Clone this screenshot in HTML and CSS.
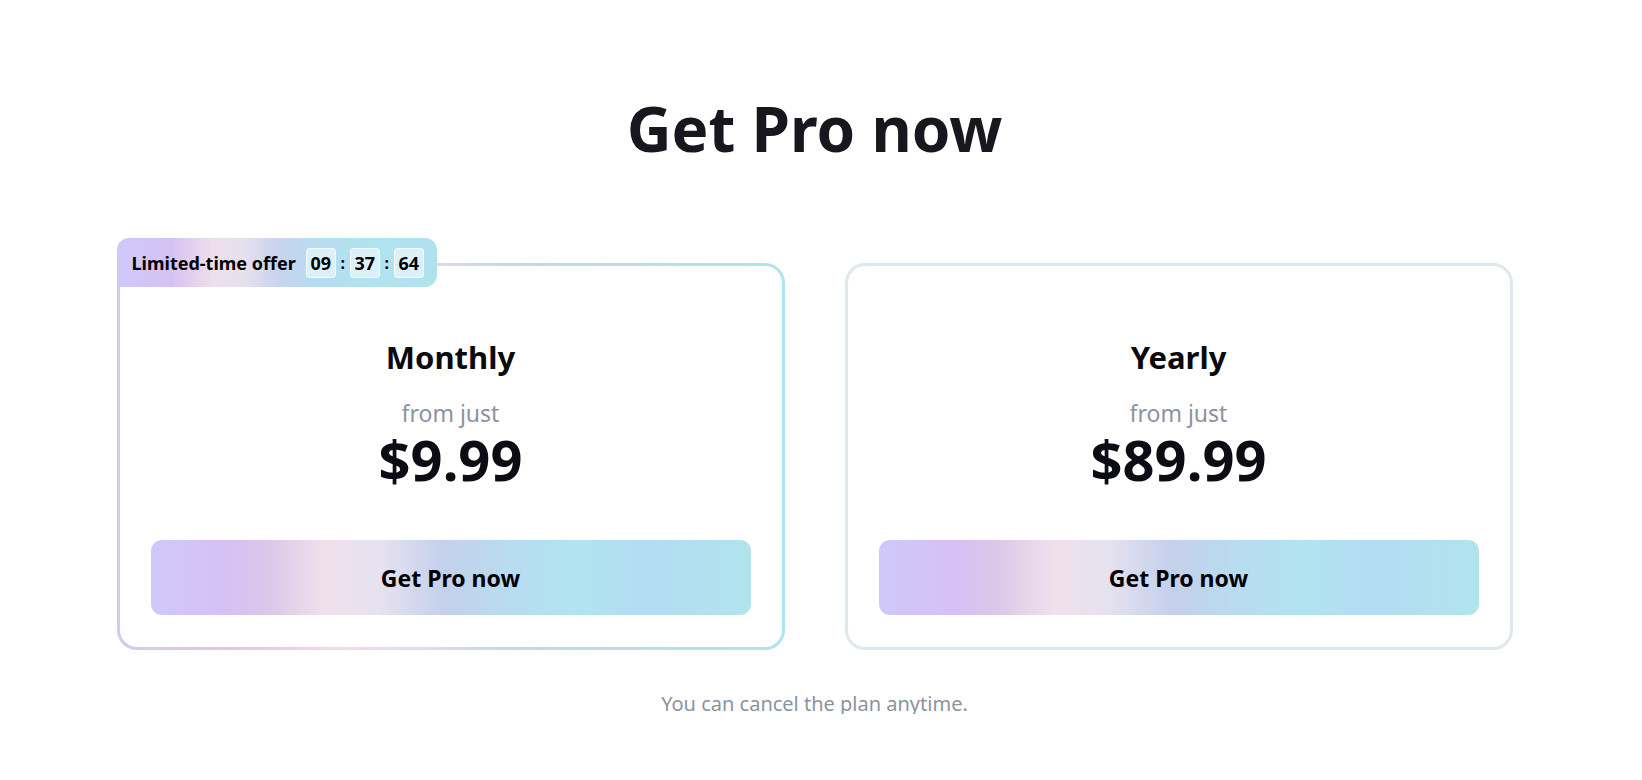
FILE: index.html
```html
<!DOCTYPE html>
<html lang="en">
<head>
<meta charset="utf-8">
<title>Get Pro now</title>
<link rel="stylesheet" href="styles.css">
</head>
<body>
<main class="page">
  <h1 class="title">Get Pro now</h1>
  <section class="plans">
    <article class="card card-featured">
      <div class="offer">
        <span class="offer-label">Limited-time offer</span>
        <span class="timer">
          <span class="tbox">09</span><span class="tsep">:</span><span class="tbox">37</span><span class="tsep">:</span><span class="tbox">64</span>
        </span>
      </div>
      <h2 class="plan-name">Monthly</h2>
      <p class="from">from just</p>
      <p class="price">$9.99</p>
      <button class="cta">Get Pro now</button>
    </article>
    <article class="card card-plain">
      <h2 class="plan-name">Yearly</h2>
      <p class="from">from just</p>
      <p class="price">$89.99</p>
      <button class="cta">Get Pro now</button>
    </article>
  </section>
  <p class="note">You can cancel the plan anytime.</p>
</main>
</body>
</html>
```
FILE: styles.css
```css
html, body {
  margin: 0;
  padding: 0;
  background: #ffffff;
}
body {
  font-family: "Noto Sans", "Open Sans", "DejaVu Sans", sans-serif;
  color: #0c0d14;
}
.page {
  width: 1629px;
  display: flex;
  flex-direction: column;
  align-items: center;
  padding-top: 97px;
}
.title {
  margin: 0;
  font-size: 62px;
  line-height: 1;
  font-weight: 700;
  color: #17181d;
}
.plans {
  display: flex;
  gap: 60px;
  margin-top: 104px;
}
.card {
  position: relative;
  box-sizing: border-box;
  width: 668px;
  height: 387px;
  border: 3px solid transparent;
  border-radius: 20px;
  padding: 76px 31px 31px;
  display: flex;
  flex-direction: column;
  align-items: center;
}
.card-featured {
  background:
    linear-gradient(#fff, #fff) padding-box,
    linear-gradient(90deg, #d4c8f6 0%, #dcc8ec 18%, #eedde9 33%, #e2dcef 45%, #c6d4ec 60%, #b6dcef 75%, #b0e3ee 88%, #b0e4ee 100%) border-box;
}
.card-plain {
  background: #fff;
  border-color: #dfe8ee;
}
.offer {
  position: absolute;
  left: -3px;
  top: -28px;
  width: 320px;
  height: 49px;
  box-sizing: border-box;
  border-radius: 12px 12px 12px 0;
  background: linear-gradient(90deg, #cfc8fb 0%, #d6c2f2 17%, #eddfeb 30%, #e6e0ef 40%, #c8d4ee 50%, #b8dcf0 62%, #b0e3f0 80%, #b0e2ec 100%);
  display: flex;
  align-items: center;
  padding-left: 15px;
  gap: 10px;
}
.offer-label {
  font-size: 18px;
  font-weight: 700;
  color: #000;
}
.timer {
  display: flex;
  align-items: center;
}
.tbox {
  box-sizing: border-box;
  width: 30px;
  height: 30px;
  display: flex;
  align-items: center;
  justify-content: center;
  background: #dcf0f9;
  border: 1px solid rgba(255, 255, 255, 0.75);
  border-radius: 4px;
  font-size: 18px;
  font-weight: 700;
  color: #000;
}
.tsep {
  width: 14px;
  text-align: center;
  font-size: 16px;
  font-weight: 700;
  color: #000;
}
.plan-name {
  margin: 0;
  font-size: 31px;
  line-height: 1;
  font-weight: 700;
  color: #0a0a0f;
}
.from {
  margin: 29px 0 0;
  font-size: 23px;
  line-height: 1;
  color: #8b93a0;
}
.price {
  margin: 6px 0 0;
  font-size: 56px;
  line-height: 1;
  font-weight: 700;
  color: #0c0d14;
}
.cta {
  margin-top: 53px;
  width: 100%;
  height: 75px;
  border: 0;
  border-radius: 11px;
  background: linear-gradient(90deg, #d0c8fa 0%, #d6c0f4 13%, #dcc8e8 20%, #f0e0ec 29%, #e6e2f0 38%, #c4d0ec 49%, #b8dcf0 60%, #b0e4f0 71%, #b4dcf4 82%, #b0e4ec 100%);
  font-family: inherit;
  font-size: 23px;
  font-weight: 700;
  color: #000;
  cursor: pointer;
}
.note {
  margin: 44px 0 0;
  font-size: 20px;
  line-height: 1;
  color: #8b939f;
}
```
